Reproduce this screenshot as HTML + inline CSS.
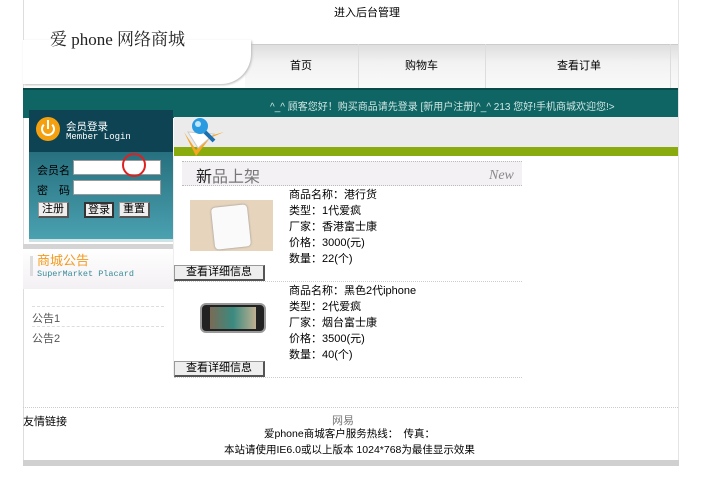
<!DOCTYPE html>
<html><head><meta charset="utf-8"><style>
*{margin:0;padding:0;box-sizing:border-box}
body{width:720px;height:478px;background:#fff;position:relative;overflow:hidden;font-family:"Liberation Sans","Noto Sans CJK SC",sans-serif;font-size:11px;color:#000}
.a{position:absolute}
.t{white-space:nowrap}
.btn{position:absolute;background:#eee;border:1px solid #999;border-right:2px solid #555;border-bottom:2px solid #555;font-size:11px;text-align:center;line-height:13px}
</style></head><body>
<div class="a" style="left:23px;top:0;width:1px;height:466px;background:#ddd"></div>
<div class="a" style="left:678px;top:0;width:1px;height:466px;background:#e4e4e4"></div>
<div class="a t" style="left:334px;top:4px;font-size:11px">进入后台管理</div>
<div class="a" style="left:245px;top:44px;width:433px;height:45px;background:linear-gradient(#dedede,#f2f2f2 40%,#fafafa);border-top:1px solid #ccc"></div>
<div class="a" style="left:23px;top:40px;width:228px;height:44px;background:#fff;border-bottom-right-radius:30px;box-shadow:1px 1px 2px #bbb"></div>
<div class="a t" style="left:50px;top:25px;font-family:'Liberation Serif','Noto Serif CJK SC',serif;font-size:17px;color:#222">爱 phone 网络商城</div>
<div class="a" style="left:358px;top:44px;width:1px;height:44px;background:#ddd"></div>
<div class="a" style="left:485px;top:44px;width:1px;height:44px;background:#ddd"></div>
<div class="a" style="left:670px;top:44px;width:1px;height:44px;background:#ddd"></div>
<div class="a t" style="left:290px;top:57px">首页</div>
<div class="a t" style="left:405px;top:57px">购物车</div>
<div class="a t" style="left:557px;top:57px">查看订单</div>
<div class="a" style="left:23px;top:88px;width:655px;height:30px;background:#0f6563;border-top:2px solid #0a4a48"></div>
<div class="a t" style="left:270px;top:98px;color:#cfe6e4;font-size:10px">^_^ 顾客您好！购买商品请先登录 [新用户注册]^_^ 213 您好!手机商城欢迎您!&gt;</div>
<div class="a" style="left:174px;top:117px;width:504px;height:30px;background:#ebebeb"></div>
<div class="a" style="left:174px;top:147px;width:504px;height:9px;background:#89ab0e"></div>
<svg class="a" style="left:180px;top:116px" width="48" height="44"><path d="M4 16 L16 40 L30 22 L44 16 L30 20 L16 34 Z" fill="#f5a623"/><path d="M8 16 L18 32 L34 18 Z" fill="#fff" stroke="#ccc"/><circle cx="20" cy="10" r="8" fill="#2a9be0"/><circle cx="18" cy="8" r="3" fill="#bfe6ff"/><path d="M25 16 L34 25" stroke="#1a6fb0" stroke-width="4"/></svg>
<div class="a" style="left:29px;top:110px;width:144px;height:42px;background:#0e4353"></div>
<div class="a" style="left:29px;top:152px;width:144px;height:87px;background:linear-gradient(#27707f,#4aa1b0)"></div>
<div class="a" style="left:29px;top:239px;width:144px;height:3px;background:#cfe3e6"></div>
<div class="a" style="left:36px;top:117px;width:24px;height:24px;border-radius:50%;background:#f5a00f"></div>
<div class="a" style="left:41px;top:122px;width:14px;height:14px;border-radius:50%;border:2px solid #fff;border-top-color:transparent"></div>
<div class="a" style="left:47px;top:120px;width:2px;height:9px;background:#fff"></div>
<div class="a t" style="left:66px;top:119px;color:#fff;font-size:10.5px">会员登录</div>
<div class="a t" style="left:66px;top:132px;color:#fff;font-family:'Liberation Mono',monospace;font-size:9px">Member Login</div>
<div class="a t" style="left:37px;top:162px;font-size:11px">会员名</div>
<div class="a t" style="left:37px;top:182px;font-size:11px">密　码</div>
<div class="a" style="left:73px;top:160px;width:88px;height:15px;background:#fff;border:1px solid #999"></div>
<div class="a" style="left:73px;top:180px;width:88px;height:15px;background:#fff;border:1px solid #999"></div>
<div class="a" style="left:122px;top:153px;width:24px;height:24px;border-radius:50%;border:2px solid #e02020"></div>
<div class="btn" style="left:38px;top:202px;width:31px;height:16px">注册</div>
<div class="btn" style="left:84px;top:202px;width:30px;height:16px;border:2px solid #333">登录</div>
<div class="btn" style="left:119px;top:202px;width:31px;height:16px">重置</div>
<div class="a" style="left:23px;top:244px;width:151px;height:5px;background:#d4d4d4"></div>
<div class="a" style="left:23px;top:249px;width:151px;height:40px;background:linear-gradient(#fff,#f3f0f3)"></div>
<div class="a" style="left:30px;top:256px;width:3px;height:20px;background:#ddd"></div>
<div class="a t" style="left:37px;top:253px;color:#f39a1e;font-size:13px;line-height:15px">商城公告</div>
<div class="a t" style="left:37px;top:269px;color:#3a8a98;font-family:'Liberation Mono',monospace;font-size:8.5px">SuperMarket Placard</div>
<div class="a" style="left:32px;top:306px;width:132px;border-top:1px dashed #ddd"></div>
<div class="a" style="left:32px;top:326px;width:132px;border-top:1px dashed #ddd"></div>
<div class="a t" style="left:32px;top:310px;color:#555">公告1</div>
<div class="a t" style="left:32px;top:330px;color:#555">公告2</div>
<div class="a" style="left:173px;top:156px;width:1px;height:220px;background:#eee"></div>
<div class="a" style="left:182px;top:161px;width:340px;height:25px;background:#f4f1f4;border-top:1px dotted #bbb;border-bottom:1px dotted #bbb"></div>
<div class="a t" style="left:196px;top:163px;font-size:16px;color:#222">新<span style="color:#777">品上架</span></div>
<div class="a t" style="left:489px;top:168px;font-family:'Liberation Serif',serif;font-style:italic;font-size:14px;color:#888">New</div>
<div class="a" style="left:190px;top:200px;width:83px;height:51px;background:#e6d4bd"></div>
<div class="a" style="left:213px;top:206px;width:36px;height:42px;background:#fafafa;border-radius:4px;transform:rotate(-6deg);box-shadow:0 0 2px #888"></div>
<div class="a t" style="left:289px;top:187px;line-height:16px">商品名称：港行货<br>类型：1代爱疯<br>厂家：香港富士康<br>价格：3000(元)<br>数量：22(个)</div>
<div class="btn" style="left:174px;top:265px;width:91px;height:16px">查看详细信息</div>
<div class="a" style="left:174px;top:281px;width:348px;border-top:1px dotted #ccc"></div>
<div class="a" style="left:200px;top:303px;width:66px;height:30px;background:#222;border-radius:6px;border:2px solid #999"></div>
<div class="a" style="left:210px;top:307px;width:46px;height:22px;background:linear-gradient(90deg,#7a6b55,#3a8a80,#c0b090)"></div>
<div class="a t" style="left:289px;top:283px;line-height:16px">商品名称：黑色2代iphone<br>类型：2代爱疯<br>厂家：烟台富士康<br>价格：3500(元)<br>数量：40(个)</div>
<div class="btn" style="left:174px;top:361px;width:91px;height:16px">查看详细信息</div>
<div class="a" style="left:174px;top:377px;width:348px;border-top:1px dotted #ccc"></div>
<div class="a" style="left:23px;top:407px;width:655px;border-top:1px dotted #ccc"></div>
<div class="a t" style="left:23px;top:413px">友情链接</div>
<div class="a t" style="left:332px;top:412px;color:#777">网易</div>
<div class="a t" style="left:264px;top:426px;font-size:10.5px">爱phone商城客户服务热线：　传真：</div>
<div class="a t" style="left:224px;top:442px;font-size:10.5px">本站请使用IE6.0或以上版本 1024*768为最佳显示效果</div>
<div class="a" style="left:23px;top:460px;width:656px;height:6px;background:#d0d0d0"></div>
</body></html>
